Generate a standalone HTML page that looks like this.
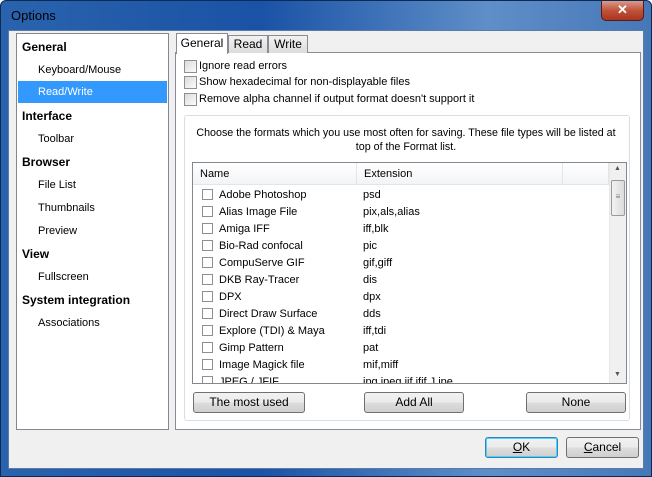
<!DOCTYPE html>
<html><head><style>
*{box-sizing:border-box;margin:0;padding:0}
body{width:652px;height:477px;overflow:hidden;font-family:"Liberation Sans",sans-serif;font-size:11px;color:#000;background:#fff}
.win{position:absolute;left:0;top:0;width:652px;height:477px;border:1px solid #0b2b55;border-radius:6px 6px 0 0;background:linear-gradient(90deg,#2a63ad 0%,#1a52a6 40%,#5f8fc8 75%,#4677b8 100%)}
.title{position:absolute;left:10px;top:7px;font-size:13px;color:#000}
.close{position:absolute;left:600px;top:0;width:43px;height:20px;border:1px solid #5a1a10;border-top:none;border-radius:0 0 5px 5px;background:linear-gradient(#d99a8c,#c0523a 50%,#a83520);color:#fff;font-weight:bold;font-size:13px;text-align:center;line-height:18px}
.client{position:absolute;left:8px;top:30px;width:636px;height:439px;background:#f0f0f0;border:1px solid #5c7aa8}
.abs{position:absolute}
.tree{left:16px;top:33px;width:153px;height:397px;background:#fff;border:1px solid #828790}
.tree div{position:absolute;white-space:nowrap}
.b{font-weight:bold;font-size:12px;left:5px}
.s{left:21px}
.sel{left:1px;width:149px;height:22px;background:#3399ff;color:#fff;padding:5px 20px}
.tab{top:35px;height:18px;border:1px solid #898c95;border-bottom:none;background:linear-gradient(#f2f2f2,#dcdcdc);text-align:center;line-height:16px;font-size:12px}
.panel{left:175px;top:52px;width:466px;height:378px;background:#fff;border:1px solid #898c95}
.cb{width:13px;height:13px;border:1px solid #8f8f8f;background:linear-gradient(135deg,#dcdcdc,#fbfbfb)}
.lbl{white-space:nowrap}
.grp{left:184px;top:115px;width:446px;height:306px;border:1px solid #d5dfe5;border-radius:3px}
.list{left:192px;top:162px;width:435px;height:222px;border:1px solid #828790;background:#fff;overflow:hidden}
.hdr{position:absolute;top:0;height:22px;border-right:1px solid #e3e5e8;border-bottom:1px solid #e3e5e8;background:linear-gradient(#fff,#f3f4f6);padding:5px 7px}
.row{position:absolute;left:0;height:17px;width:416px}
.row .c{position:absolute;left:9px;top:2px;width:11px;height:11px;border:1px solid #8f8f8f;background:#fff}
.row .n{position:absolute;left:26px;top:2px;white-space:nowrap}
.row .e{position:absolute;left:170px;top:2px;white-space:nowrap}
.sb{position:absolute;left:416px;top:0;width:17px;height:220px;background:#f0f0f0;border-left:1px solid #e8e8e8}
.btn{height:21px;border:1px solid #707070;border-radius:3px;background:linear-gradient(#f2f2f2 0%,#ebebeb 50%,#dddddd 51%,#cfcfcf 100%);text-align:center;line-height:19px;font-size:12px}
</style></head><body>
<div class="win">
<div class="title">Options</div>
<div class="close">✕</div>
</div>
<div class="client"></div>
<div class="abs tree">
<div class="b" style="top:6px">General</div>
<div class="s" style="top:30px">Keyboard/Mouse</div>
<div class="sel" style="top:47px">Read/Write</div>
<div class="b" style="top:75px">Interface</div>
<div class="s" style="top:99px">Toolbar</div>
<div class="b" style="top:121px">Browser</div>
<div class="s" style="top:145px">File List</div>
<div class="s" style="top:168px">Thumbnails</div>
<div class="s" style="top:191px">Preview</div>
<div class="b" style="top:213px">View</div>
<div class="s" style="top:237px">Fullscreen</div>
<div class="b" style="top:259px">System integration</div>
<div class="s" style="top:283px">Associations</div>
</div>
<div class="abs panel"></div>
<div class="abs tab" style="left:228px;width:40px">Read</div>
<div class="abs tab" style="left:268px;width:40px">Write</div>
<div class="abs tab" style="left:176px;top:33px;width:52px;height:21px;background:#fff;line-height:18px">General</div>
<div class="abs cb" style="left:184px;top:60px"></div><div class="abs lbl" style="left:199px;top:60px">Ignore read errors</div>
<div class="abs cb" style="left:184px;top:76px"></div><div class="abs lbl" style="left:199px;top:76px">Show hexadecimal for non-displayable files</div>
<div class="abs cb" style="left:184px;top:93px"></div><div class="abs lbl" style="left:199px;top:93px">Remove alpha channel if output format doesn't support it</div>
<div class="abs grp"></div>
<div class="abs" style="left:190px;top:126px;width:432px;text-align:center;line-height:14px;font-size:10.7px">Choose the formats which you use most often for saving. These file types will be listed at top of the Format list.</div>
<div class="abs list">
<div class="hdr" style="left:0;width:164px">Name</div>
<div class="hdr" style="left:164px;width:206px">Extension</div>
<div class="hdr" style="left:370px;width:46px"></div>
<div class="row" style="top:24px"><div class="c"></div><div class="n">Adobe Photoshop</div><div class="e">psd</div></div>
<div class="row" style="top:41px"><div class="c"></div><div class="n">Alias Image File</div><div class="e">pix,als,alias</div></div>
<div class="row" style="top:58px"><div class="c"></div><div class="n">Amiga IFF</div><div class="e">iff,blk</div></div>
<div class="row" style="top:75px"><div class="c"></div><div class="n">Bio-Rad confocal</div><div class="e">pic</div></div>
<div class="row" style="top:92px"><div class="c"></div><div class="n">CompuServe GIF</div><div class="e">gif,giff</div></div>
<div class="row" style="top:109px"><div class="c"></div><div class="n">DKB Ray-Tracer</div><div class="e">dis</div></div>
<div class="row" style="top:126px"><div class="c"></div><div class="n">DPX</div><div class="e">dpx</div></div>
<div class="row" style="top:143px"><div class="c"></div><div class="n">Direct Draw Surface</div><div class="e">dds</div></div>
<div class="row" style="top:160px"><div class="c"></div><div class="n">Explore (TDI) &amp; Maya</div><div class="e">iff,tdi</div></div>
<div class="row" style="top:177px"><div class="c"></div><div class="n">Gimp Pattern</div><div class="e">pat</div></div>
<div class="row" style="top:194px"><div class="c"></div><div class="n">Image Magick file</div><div class="e">mif,miff</div></div>
<div class="row" style="top:211px"><div class="c"></div><div class="n">JPEG / JFIF</div><div class="e">jpg,jpeg,jif,jfif,J,jpe</div></div>
<div class="sb">
<div class="abs" style="left:4px;top:2px;font-size:7px;color:#555">▲</div>
<div class="abs" style="left:1px;top:17px;width:14px;height:36px;border:1px solid #9a9a9a;border-radius:2px;background:linear-gradient(90deg,#f2f2f2,#dcdcdc);font-size:8px;text-align:center;line-height:32px;color:#777">≡</div>
<div class="abs" style="left:4px;top:208px;font-size:7px;color:#555">▼</div>
</div>
</div>
<div class="abs btn" style="left:193px;top:392px;width:112px">The most used</div>
<div class="abs btn" style="left:364px;top:392px;width:100px">Add All</div>
<div class="abs btn" style="left:526px;top:392px;width:100px">None</div>
<div class="abs btn" style="left:485px;top:437px;width:73px;border-color:#3c7fb1;box-shadow:inset 0 0 0 1px #48d4fd"><u>O</u>K</div>
<div class="abs btn" style="left:566px;top:437px;width:73px"><u>C</u>ancel</div>
</body></html>
